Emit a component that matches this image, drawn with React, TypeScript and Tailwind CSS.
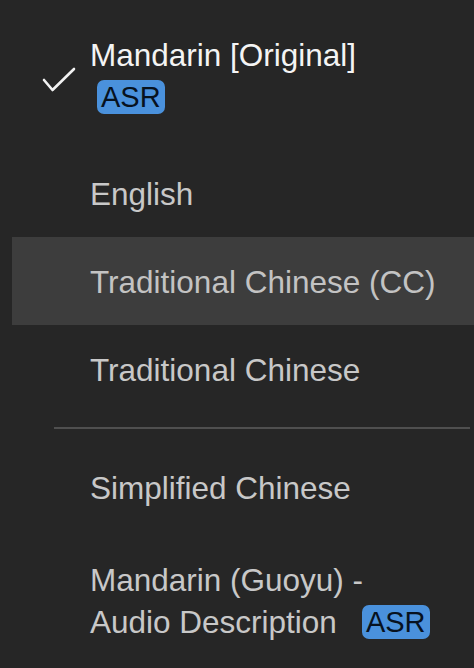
import { Fragment } from "react";

const font = { fontFamily: '"Liberation Sans", Arial, Helvetica, sans-serif' };

function Badge({ className = "" }: { className?: string }) {
    return (
        <span
            className={`inline-flex items-center justify-center h-[34px] px-[4px] rounded-[7px] bg-[#4a91dc] text-[#07121f] text-[29px] leading-none ${className}`}
        >
            ASR
        </span>
    );
}

function Check() {
    return (
        <svg width="34" height="26" viewBox="0 0 34 26" fill="none" className="ml-[42px] mt-[33px]">
            <path d="M2 13 L10.5 23 L32 2" stroke="#f2f2f2" strokeWidth="2.6" strokeLinecap="round" strokeLinejoin="round" />
        </svg>
    );
}

const rows = [
    { label: "English", active: false },
    { label: "Traditional Chinese (CC)", active: true },
    { label: "Traditional Chinese", active: false },
];

export default function App() {
    return (
        <div className="w-[474px] h-[668px] overflow-hidden bg-[#262626] text-[31.5px]" style={font}>
            {/* Selected track */}
            <div className="flex pt-[34px]">
                <div className="w-[90px] shrink-0">
                    <Check />
                </div>
                <div className="flex flex-col items-start">
                    <span className="leading-[42px] text-[#f4f4f4]">Mandarin [Original]</span>
                    <Badge className="ml-[7px] mt-[4px]" />
                </div>
            </div>

            <div className="mt-[35px]">
                {rows.map((row) => (
                    <Fragment key={row.label}>
                        <div
                            className={`h-[88px] flex items-center pt-[4px] pl-[78px] ml-[12px] ${row.active ? "bg-[#3d3d3d] text-[#c3c3c3]" : "text-[#c8c8c8]"}`}
                        >
                            {row.label}
                        </div>
                    </Fragment>
                ))}
            </div>

            {/* Divider */}
            <div className="ml-[54px] mr-[4px] mt-[14px] h-[2px] bg-[#4f4f4f]" />

            <div className="h-[88px] mt-[14px] pt-[4px] flex items-center pl-[90px] text-[#c8c8c8]">
                Simplified Chinese
            </div>

            <div className="pt-[28px] pl-[90px] text-[#c8c8c8] leading-[42px]">
                <div>Mandarin (Guoyu) -</div>
                <div className="flex items-center">
                    <span>Audio Description</span>
                    <Badge className="ml-[25px]" />
                </div>
            </div>
        </div>
    );
}
